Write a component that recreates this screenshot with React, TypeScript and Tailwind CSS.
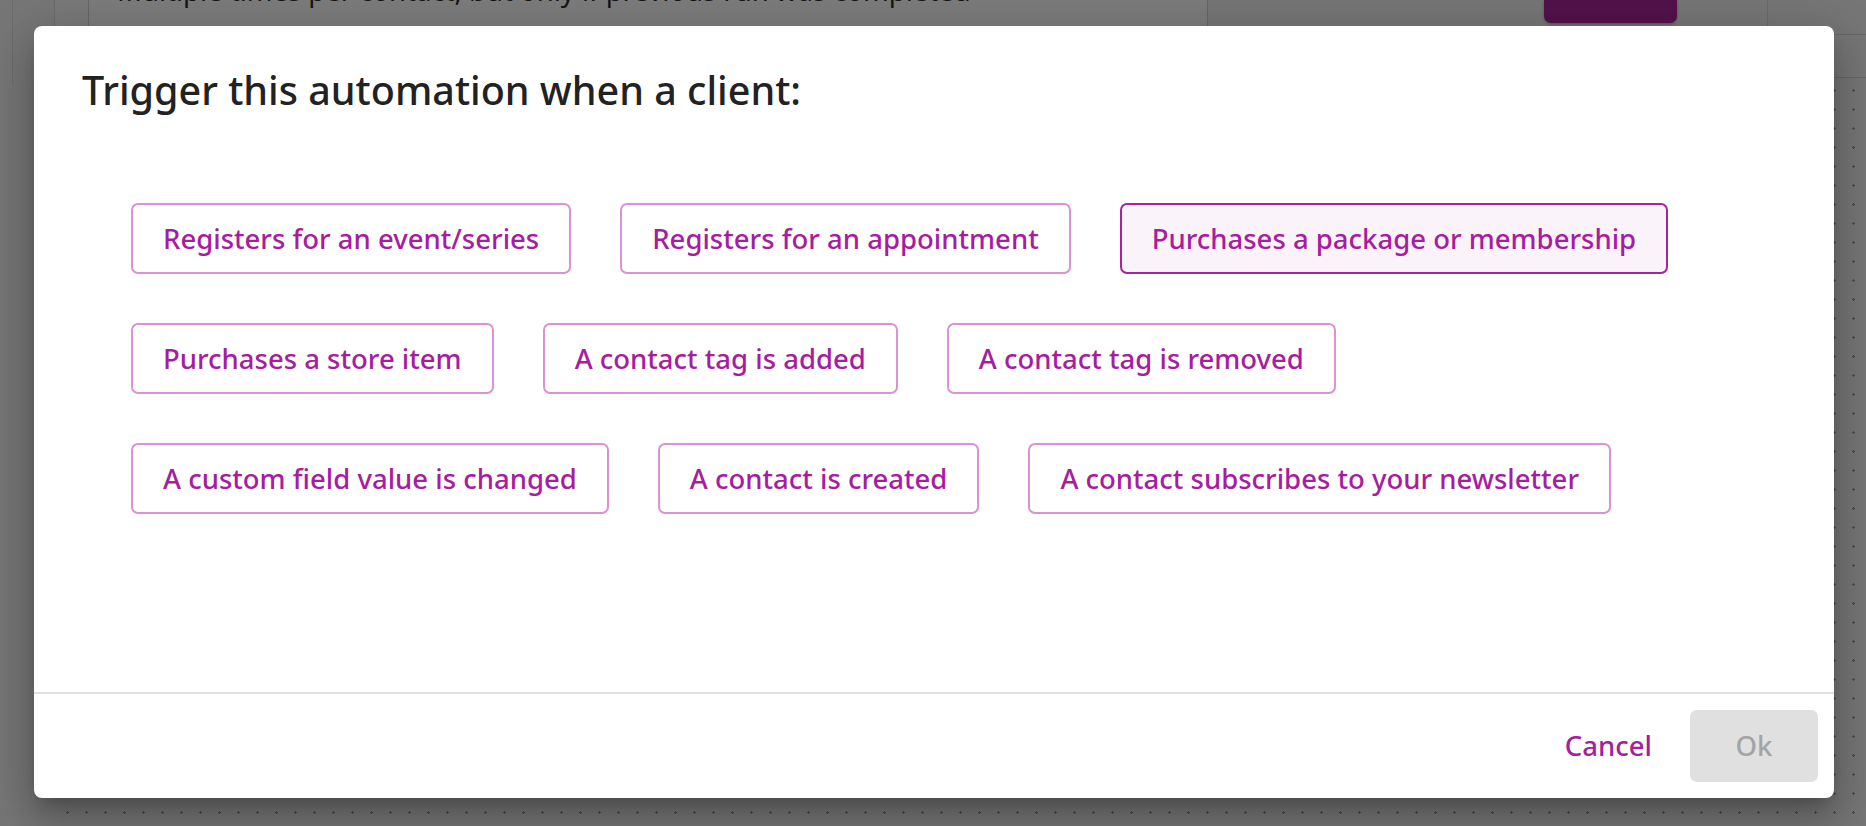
import React from "react";

const rows: string[][] = [
  ["Registers for an event/series", "Registers for an appointment", "Purchases a package or membership"],
  ["Purchases a store item", "A contact tag is added", "A contact tag is removed"],
  ["A custom field value is changed", "A contact is created", "A contact subscribes to your newsletter"],
];

const selected = "Purchases a package or membership";

const TriggerOption: React.FC<{ label: string; active: boolean }> = ({ label, active }) => (
  <button
    type="button"
    className={`flex h-[71px] items-center rounded-[7px] border-2 px-[30px] text-[27.5px] font-medium leading-none text-[#a71d9e] ${
      active ? "border-[#a9229f] bg-[#fbf3fa]" : "border-[#dc91d5] bg-white"
    }`}
  >
    {label}
  </button>
);

export default function App() {
  return (
    <div className="relative h-[826px] w-full overflow-hidden bg-[#767676] font-['Noto_Sans',sans-serif]">
      {/* dimmed page behind the dialog */}
      <div className="flex h-full flex-col">
        <div className="flex h-[85px]">
          <div className="w-[13px] border-r border-[#6c6c6c]" />
          <div className="w-[42px] border-r border-[#6a6a6a]" />
          <div className="w-[34px] border-r border-[#666666] bg-[#797979]" />
          <div className="w-[1119px] border-r border-[#666666] bg-[#7b7b7b] pl-[28px]">
            <p className="-mt-[29px] text-[27.5px] leading-[40px] text-[#151515]">
              Multiple times per contact, but only if previous run was completed
            </p>
          </div>
          <div className="flex flex-1 flex-col">
            <div className="flex h-[35px] border-b border-[#666666]">
              <div className="flex w-[560px] border-r border-[#6a6a6a] pl-[336px]">
                <div className="h-[23px] w-[133px] rounded-b-[7px] bg-[#52124a] shadow-[0_1px_3px_rgba(0,0,0,0.3)]" />
              </div>
            </div>
            <div className="h-[43px] border-b border-[#666666]" />
          </div>
        </div>
        <div className="flex flex-1">
          <div className="w-[58px]" />
          <div className="flex-1 bg-[radial-gradient(circle,#4a4a4a_1px,transparent_1.2px)] bg-size-[19px_19px] bg-position-[0px_-4px]" />
        </div>
      </div>

      {/* dialog */}
      <div className="absolute left-[34px] top-[26px] flex h-[772px] w-[1800px] flex-col rounded-[8px] bg-white shadow-[0_24px_38px_3px_rgba(0,0,0,0.16),0_9px_46px_8px_rgba(0,0,0,0.13),0_11px_15px_-7px_rgba(0,0,0,0.2)]">
        <div className="flex-1 px-[48px] pt-[37px]">
          <h2 className="text-[39.5px] font-medium leading-[55px] text-[#222222]">
            Trigger this automation when a client:
          </h2>
          <div className="mt-[85px] flex flex-col gap-[49px] pl-[49px]">
            {rows.map((row, i) => (
              <div key={i} className="flex gap-[49px]">
                {row.map((label) => (
                  <TriggerOption key={label} label={label} active={label === selected} />
                ))}
              </div>
            ))}
          </div>
        </div>
        <div className="flex h-[106px] items-center justify-end gap-[38px] border-t-2 border-[#e0e0e0] pr-[16px]">
          <button type="button" className="text-[27.5px] font-medium text-[#a71d9e]">
            Cancel
          </button>
          <button
            type="button"
            className="h-[72px] w-[128px] rounded-[7px] bg-[#e0e0e0] text-[27.5px] font-medium text-[#a4a4a4]"
          >
            Ok
          </button>
        </div>
      </div>
    </div>
  );
}
